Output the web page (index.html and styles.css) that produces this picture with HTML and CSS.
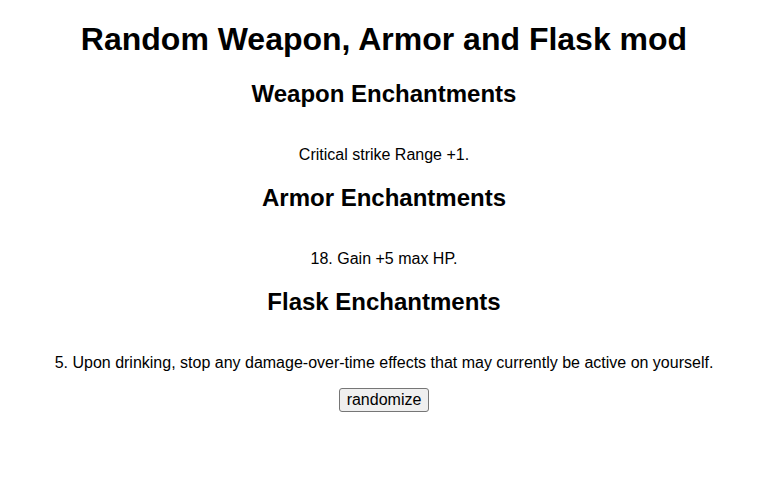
FILE: index.html
```html
<!DOCTYPE html>
<html lang="en">
<head>
    <meta charset="UTF-8">
    <meta name="viewport" content="width=device-width, initial-scale=1.0">
    <title>Random Weapon, Armor and Flask mod</title>
    <link rel="stylesheet" href="styles.css">
</head>
<body>
    <h1>Random Weapon, Armor and Flask mod</h1>

    <h2>Weapon Enchantments</h2>
    <p class="enchant" id="weapon">Critical strike Range +1.</p>

    <h2>Armor Enchantments</h2>
    <p class="enchant" id="armor">18. Gain +5 max HP.</p>

    <h2>Flask Enchantments</h2>
    <p class="enchant last" id="flask">5. Upon drinking, stop any damage-over-time effects that may currently be active on yourself.</p>

    <button id="randomize">randomize</button>
</body>
</html>
```

FILE: styles.css
```css
body {
    font-family: "Liberation Sans", Arial, sans-serif;
    margin: 0;
    text-align: center;
    color: #000;
    background-color: #fff;
}
h1 {
    font-size: 32px;
    margin: 21.44px 0;
}
h2 {
    font-size: 24px;
    margin: 19.92px 0;
}
.enchant {
    margin: 38px 0 0;
}
.enchant.last {
    margin-bottom: 16px;
}
button {
    font-family: "Liberation Sans", Arial, sans-serif;
    font-size: 16px;
    color: #000;
    padding: 2px 7px;
    background-color: #efefef;
    border: 1px solid #767676;
    border-radius: 3px;
}
```
